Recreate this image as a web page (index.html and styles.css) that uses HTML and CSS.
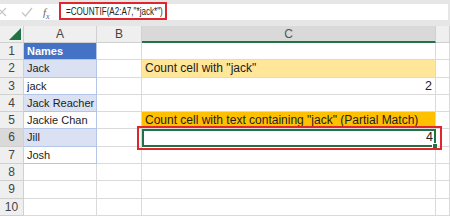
FILE: index.html
```html
<!DOCTYPE html>
<html lang="en">
<head>
    <meta charset="UTF-8">
    <title>COUNTIF partial match</title>
    <link rel="stylesheet" href="styles.css">
</head>
<body>
    <div class="topbar">
        <div class="formula-row">
            <svg class="icon cancel" width="10" height="16" viewBox="0 0 10 16">
                <path d="M0 4 L8 12 M8 4 L0 12" stroke="#c4c4c4" stroke-width="1.2" fill="none"/>
            </svg>
            <svg class="icon enter" width="12" height="16" viewBox="0 0 12 16">
                <path d="M1 8.5 L4.5 12 L11 4" stroke="#c4c4c4" stroke-width="1.2" fill="none"/>
            </svg>
            <span class="fx">f<sub>x</sub></span>
            <div class="formula"><span class="formula-text">=COUNTIF(A2:A7,"*jack*")</span></div>
        </div>
    </div>

    <div class="sheet">
        <!-- header row -->
        <div class="corner">
            <svg width="12" height="12" viewBox="0 0 12 12"><polygon points="12,0 12,12 0,12" fill="#217346"/></svg>
        </div>
        <div class="hd">A</div>
        <div class="hd">B</div>
        <div class="hd selected">C</div>
        <div class="hd"></div>

        <div class="rh">1</div>
        <div class="c tbl head">Names</div>
        <div class="c"></div>
        <div class="c"></div>
        <div class="c"></div>

        <div class="rh">2</div>
        <div class="c tbl band">Jack</div>
        <div class="c"></div>
        <div class="c label">Count cell with "jack"</div>
        <div class="c"></div>

        <div class="rh">3</div>
        <div class="c tbl">jack</div>
        <div class="c"></div>
        <div class="c num">2</div>
        <div class="c"></div>

        <div class="rh">4</div>
        <div class="c tbl band">Jack Reacher</div>
        <div class="c"></div>
        <div class="c"></div>
        <div class="c"></div>

        <div class="rh">5</div>
        <div class="c tbl">Jackie Chan</div>
        <div class="c"></div>
        <div class="c label orange">Count cell with text containing "jack" (Partial Match)</div>
        <div class="c"></div>

        <div class="rh selected">6</div>
        <div class="c tbl band">Jill</div>
        <div class="c"></div>
        <div class="c num active">4<span class="handle"></span></div>
        <div class="c"></div>

        <div class="rh">7</div>
        <div class="c tbl">Josh</div>
        <div class="c"></div>
        <div class="c"></div>
        <div class="c"></div>

        <div class="rh">8</div>
        <div class="c"></div>
        <div class="c"></div>
        <div class="c"></div>
        <div class="c"></div>

        <div class="rh">9</div>
        <div class="c"></div>
        <div class="c"></div>
        <div class="c"></div>
        <div class="c"></div>

        <div class="rh">10</div>
        <div class="c"></div>
        <div class="c"></div>
        <div class="c"></div>
        <div class="c"></div>
    </div>
</body>
</html>
```

FILE: styles.css
```css
* {
    box-sizing: border-box;
}
body {
    margin: 0;
    width: 450px;
    height: 216px;
    overflow: hidden;
    font-family: "Liberation Sans", Arial, sans-serif;
    font-size: 12px;
    color: #222;
    background: #fff;
}

/* formula bar */
.topbar {
    height: 26px;
    background: #e6e6e6;
    padding-top: 4px;
    padding-right: 2px;
}
.formula-row {
    height: 16px;
    background: #fff;
    display: flex;
    align-items: flex-start;
}
.icon {
    flex: none;
}
.cancel {
    margin-left: -2px;
    margin-right: 13px;
}
.enter {
    margin-right: 10px;
}
.fx {
    width: 16px;
    color: #666;
    font-family: "Liberation Serif", serif;
    font-style: italic;
    font-size: 11px;
    line-height: 16px;
}
.fx sub {
    font-size: 8px;
}
.formula {
    flex: none;
    margin-top: -2px;
    width: 108px;
    height: 18px;
    border: 2px solid #e0262c;
    padding-left: 5px;
    white-space: nowrap;
}
.formula-text {
    display: inline-block;
    font-size: 10.5px;
    line-height: 14px;
    color: #222;
    transform: scaleX(0.77);
    transform-origin: left center;
}

/* grid */
.sheet {
    display: grid;
    grid-template-columns: 24px 73px 45px 294px 14px;
    grid-template-rows: 17px repeat(10, 17.3px);
}
.corner,
.hd,
.rh {
    background: #efefef;
    color: #444;
    border-right: 1px solid #d0d0d0;
    border-bottom: 1px solid #d0d0d0;
}
.corner {
    display: flex;
    align-items: flex-end;
    justify-content: flex-end;
    padding: 0 2px 2px 0;
}
.hd {
    text-align: center;
    line-height: 16px;
}
.hd.selected {
    background: #d9d9d9;
    color: #555;
    border-bottom: 2px solid #217346;
}
.rh {
    text-align: center;
    line-height: 16px;
}
.rh.selected {
    background: #d9d9d9;
}
.c {
    border-right: 1px solid #dadada;
    border-bottom: 1px solid #dadada;
    padding: 0 3px;
    line-height: 16px;
    white-space: nowrap;
}

/* table in column A */
.tbl {
    border-bottom-color: #b4c6e7;
    border-right: 1px solid #b4c6e7;
    font-size: 11px;
    padding-left: 3px;
}
.tbl.head {
    background: #4472c4;
    color: #fff;
    font-weight: bold;
}
.tbl.band {
    background: #d9e1f2;
}

.label {
    background: #ffe699;
}
.label.orange {
    background: #ffc000;
}
.num {
    text-align: right;
    font-size: 12.5px;
}
.active {
    position: relative;
    border: 2px solid #217346;
    line-height: 13px;
    padding-right: 1px;
}
.active::after {
    content: "";
    position: absolute;
    left: -7px;
    top: -5px;
    right: -8px;
    bottom: -5px;
    border: 2px solid #e0262c;
}
.handle {
    position: absolute;
    right: -4px;
    bottom: -4px;
    width: 6px;
    height: 6px;
    background: #217346;
    border: 1px solid #fff;
}
```
